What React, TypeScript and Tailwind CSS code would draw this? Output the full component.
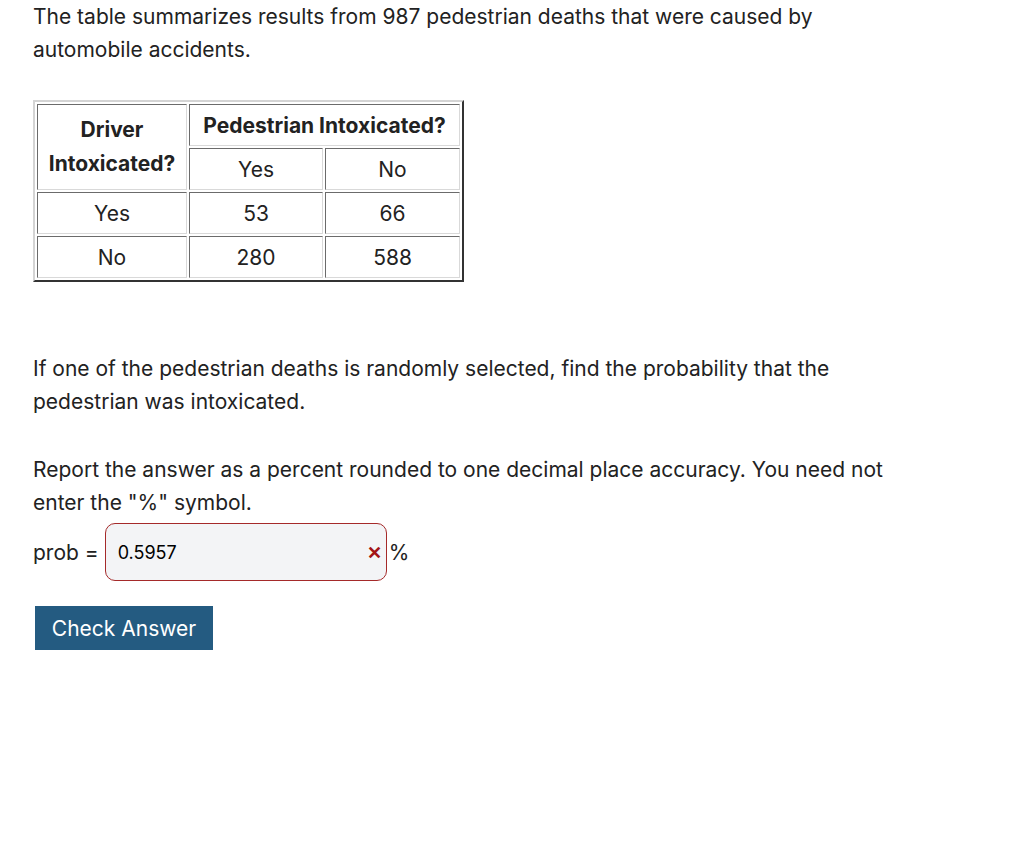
export default function App() {
  const cell = "border border-t-[#6b6b6b] border-l-[#6b6b6b] border-b-[#d9d9d9] border-r-[#d9d9d9] text-center align-middle px-[6px] py-[2px]";
  return (
    <div
      className="bg-white min-h-[846px] w-[1024px] pl-[33px] text-[21px] leading-[33px] text-[#222]"
      style={{ fontFamily: "Inter, 'Liberation Sans', sans-serif" }}
    >
      <p className="w-[880px]">
        The table summarizes results from 987 pedestrian deaths that were caused by automobile accidents.
      </p>

      <table className="mt-[34px] border-separate border-spacing-[2px] border-2 border-t-[#d4d4d4] border-l-[#d4d4d4] border-b-[#333] border-r-[#333]">
        <tbody>
          <tr>
            <td rowSpan={2} className={`${cell} w-[150px] font-bold leading-[34px]`}>
              Driver
              <br />
              Intoxicated?
            </td>
            <td colSpan={2} className={`${cell} font-bold h-[42px]`}>
              Pedestrian Intoxicated?
            </td>
          </tr>
          <tr>
            <td className={`${cell} w-[134px] h-[42px]`}>Yes</td>
            <td className={`${cell} w-[135px]`}>No</td>
          </tr>
          <tr>
            <td className={`${cell} h-[42px]`}>Yes</td>
            <td className={cell}>53</td>
            <td className={cell}>66</td>
          </tr>
          <tr>
            <td className={`${cell} h-[42px]`}>No</td>
            <td className={cell}>280</td>
            <td className={cell}>588</td>
          </tr>
        </tbody>
      </table>

      <p className="mt-[70px] w-[880px]">
        If one of the pedestrian deaths is randomly selected, find the probability that the pedestrian was intoxicated.
      </p>

      <p className="mt-[35px] w-[880px]">
        Report the answer as a percent rounded to one decimal place accuracy. You need not enter the "%" symbol.
      </p>

      <div className="mt-[4px] flex items-center">
        <span>prob =</span>
        <div className="ml-[6px] flex items-center h-[58px] w-[282px] rounded-[10px] border border-[#a52a2a] bg-[#f3f4f6] pl-[12px] pr-[4px]">
          <span className="flex-1 text-[18px] text-black">0.5957</span>
          <span className="text-[#a31515] text-[18px] font-bold">✕</span>
        </div>
        <span className="ml-[2px]">%</span>
      </div>

      <button className="mt-[25px] ml-[2px] h-[44px] w-[178px] bg-[#245b81] text-white text-[21px]">
        Check Answer
      </button>
    </div>
  );
}
